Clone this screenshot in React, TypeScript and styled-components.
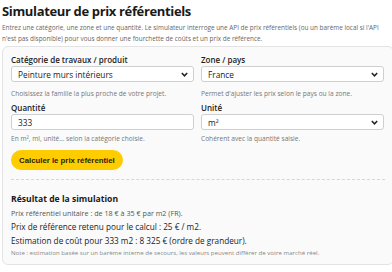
import React from "react";
import styled, { createGlobalStyle } from "styled-components";

const Global = createGlobalStyle`
  html, body { margin: 0; padding: 0; background: #ffffff; }
  body { padding: 2px 0 0 2px; font-family: "Open Sans", "Noto Sans", sans-serif; color: #222; overflow: hidden; }
  * { box-sizing: border-box; }
`;

const Title = styled.h1`
  margin: 0;
  font-size: 13px;
  line-height: 18px;
  font-weight: 700;
  letter-spacing: -0.35px;
  color: #1a1a1a;
`;

const Intro = styled.p`
  margin: 2px 0 2px 0;
  font-size: 6.4px;
  line-height: 11px;
  color: #666;
  width: 386px;
`;

const Card = styled.section`
  width: 392px;
  background: #fafafa;
  border: 1px solid #e3e3e3;
  border-radius: 6px;
  padding: 7px 8px 6px 8px;
`;

const Grid = styled.div`
  display: grid;
  grid-template-columns: 183px 183px;
  column-gap: 7px;
  row-gap: 4px;
`;

const Field = styled.div`
  display: flex;
  flex-direction: column;
`;

const Label = styled.label`
  font-size: 8px;
  line-height: 12px;
  font-weight: 600;
  color: #222;
`;

const Control = styled.div`
  height: 16px;
  background: #fff;
  border: 1px solid #cfcfcf;
  border-radius: 3px;
  display: flex;
  align-items: center;
  justify-content: space-between;
  padding: 0 5px 0 6px;
  font-size: 8.3px;
  color: #222;
`;

const Help = styled.div<{ $gap: number }>`
  margin-top: ${(p) => p.$gap}px;
  font-size: 6.6px;
  line-height: 9px;
  color: #777;
  white-space: nowrap;
`;

const Button = styled.button`
  margin-top: 7px;
  height: 20px;
  padding: 0 8px;
  border: none;
  border-radius: 999px;
  background: #ffcc00;
  color: #2a2200;
  font-family: "Liberation Sans", Arial, sans-serif;
  font-weight: 700;
  font-size: 7.8px;
  cursor: pointer;
`;

const Divider = styled.hr`
  margin: 9px 0 12px 0;
  border: none;
  border-top: 1px dashed #d6d6d6;
`;

const ResultTitle = styled.h2`
  margin: 0;
  font-size: 8.6px;
  line-height: 14px;
  font-weight: 700;
  color: #1a1a1a;
`;

const Line = styled.p<{ $tone: "muted" | "main" | "note" }>`
  margin: 0;
  white-space: nowrap;
  font-size: ${(p) => (p.$tone === "main" ? "8.2px" : p.$tone === "muted" ? "7.2px" : "6.1px")};
  line-height: ${(p) => (p.$tone === "note" ? "10px" : "14px")};
  color: ${(p) => (p.$tone === "main" ? "#222" : p.$tone === "muted" ? "#555" : "#888")};
`;

const Chevron = () => (
  <svg width="7" height="5" viewBox="0 0 7 5">
    <path d="M0.8 1 L3.5 3.8 L6.2 1" fill="none" stroke="#222" strokeWidth="1.5" />
  </svg>
);

export default function App() {
  return (
    <>
      <Global />
      <Title>Simulateur de prix référentiels</Title>
      <Intro>
        Entrez une catégorie, une zone et une quantité. Le simulateur interroge une API de prix référentiels (ou un barème local si l'API
        n'est pas disponible) pour vous donner une fourchette de coûts et un prix de référence.
      </Intro>
      <Card>
        <Grid>
          <Field>
            <Label>Catégorie de travaux / produit</Label>
            <Control>
              <span>Peinture murs intérieurs</span>
              <Chevron />
            </Control>
            <Help $gap={7}>Choisissez la famille la plus proche de votre projet.</Help>
          </Field>
          <Field>
            <Label>Zone / pays</Label>
            <Control>
              <span>France</span>
              <Chevron />
            </Control>
            <Help $gap={7}>Permet d'ajuster les prix selon le pays ou la zone.</Help>
          </Field>
          <Field>
            <Label>Quantité</Label>
            <Control>
              <span>333</span>
            </Control>
            <Help $gap={4}>En m², ml, unité… selon la catégorie choisie.</Help>
          </Field>
          <Field>
            <Label>Unité</Label>
            <Control>
              <span>m²</span>
              <Chevron />
            </Control>
            <Help $gap={4}>Cohérent avec la quantité saisie.</Help>
          </Field>
        </Grid>
        <Button>Calculer le prix référentiel</Button>
        <Divider />
        <ResultTitle>Résultat de la simulation</ResultTitle>
        <Line $tone="muted">Prix référentiel unitaire : de 18 € à 35 € par m2 (FR).</Line>
        <Line $tone="main">Prix de référence retenu pour le calcul : 25 € / m2.</Line>
        <Line $tone="main">Estimation de coût pour 333 m2 : 8 325 € (ordre de grandeur).</Line>
        <Line $tone="note">Note : estimation basée sur un barème interne de secours, les valeurs peuvent différer de votre marché réel.</Line>
      </Card>
    </>
  );
}
